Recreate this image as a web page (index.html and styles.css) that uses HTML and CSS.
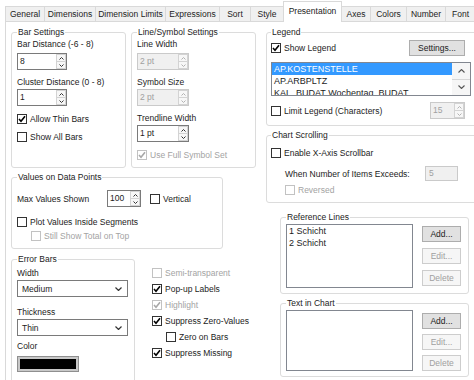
FILE: index.html
```html
<!DOCTYPE html>
<html lang="en">
<head>
    <meta charset="UTF-8">
    <title>Chart Properties - Presentation</title>
    <link rel="stylesheet" href="styles.css">
</head>
<body>
    <div class="tabs">
        <div class="tab" style="width:40px">General</div>
        <div class="tab" style="width:52px">Dimensions</div>
        <div class="tab" style="width:71px">Dimension Limits</div>
        <div class="tab" style="width:55px">Expressions</div>
        <div class="tab" style="width:32px">Sort</div>
        <div class="tab" style="width:34px">Style</div>
        <div class="tab active" style="width:59px">Presentation</div>
        <div class="tab" style="width:30px">Axes</div>
        <div class="tab" style="width:37px">Colors</div>
        <div class="tab" style="width:40px">Number</div>
        <div class="tab" style="width:31px">Font</div>
    </div>

    <div class="panel">
        <!-- left half: bar / line settings, values, error bars -->
        <div class="left">
            <div class="row-top">
                <fieldset class="bar-settings">
                    <legend>Bar Settings</legend>
                    <div class="lbl">Bar Distance (-6 - 8)</div>
                    <div class="spin w50 mt3">
                        <span class="val">8</span>
                        <span class="arrows"><span><svg viewBox="0 0 5 3"><path d="M.5 2.5l2-2 2 2"/></svg></span><span><svg viewBox="0 0 5 3"><path d="M.5.5l2 2 2-2"/></svg></span></span>
                    </div>
                    <div class="lbl mt6">Cluster Distance (0 - 8)</div>
                    <div class="spin w50 mt1">
                        <span class="val">1</span>
                        <span class="arrows"><span><svg viewBox="0 0 5 3"><path d="M.5 2.5l2-2 2 2"/></svg></span><span><svg viewBox="0 0 5 3"><path d="M.5.5l2 2 2-2"/></svg></span></span>
                    </div>
                    <div class="check mt7"><span class="box"><svg viewBox="0 0 8 8"><path d="M1 4l2 2.2L7 1.2"/></svg></span>Allow Thin Bars</div>
                    <div class="check mt6"><span class="box"></span>Show All Bars</div>
                </fieldset>

                <fieldset class="line-settings">
                    <legend>Line/Symbol Settings</legend>
                    <div class="lbl">Line Width</div>
                    <div class="spin w52 mt3 dis">
                        <span class="val">2 pt</span>
                        <span class="arrows"><span><svg viewBox="0 0 5 3"><path d="M.5 2.5l2-2 2 2"/></svg></span><span><svg viewBox="0 0 5 3"><path d="M.5.5l2 2 2-2"/></svg></span></span>
                    </div>
                    <div class="lbl mt6">Symbol Size</div>
                    <div class="spin w52 mt1 dis">
                        <span class="val">2 pt</span>
                        <span class="arrows"><span><svg viewBox="0 0 5 3"><path d="M.5 2.5l2-2 2 2"/></svg></span><span><svg viewBox="0 0 5 3"><path d="M.5.5l2 2 2-2"/></svg></span></span>
                    </div>
                    <div class="lbl mt6">Trendline Width</div>
                    <div class="spin w52 mt1">
                        <span class="val">1 pt</span>
                        <span class="arrows"><span><svg viewBox="0 0 5 3"><path d="M.5 2.5l2-2 2 2"/></svg></span><span><svg viewBox="0 0 5 3"><path d="M.5.5l2 2 2-2"/></svg></span></span>
                    </div>
                    <div class="check dis mt7"><span class="box"><svg viewBox="0 0 8 8"><path d="M1 4l2 2.2L7 1.2"/></svg></span>Use Full Symbol Set</div>
                </fieldset>
            </div>

            <fieldset class="values">
                <legend>Values on Data Points</legend>
                <div class="max-row">
                    <span class="max-lbl">Max Values Shown</span>
                    <div class="spin w34">
                        <span class="val">100</span>
                        <span class="arrows"><span><svg viewBox="0 0 5 3"><path d="M.5 2.5l2-2 2 2"/></svg></span><span><svg viewBox="0 0 5 3"><path d="M.5.5l2 2 2-2"/></svg></span></span>
                    </div>
                    <div class="check vertical"><span class="box"></span>Vertical</div>
                </div>
                <div class="check mt9"><span class="box"></span>Plot Values Inside Segments</div>
                <div class="check dis indent mt2"><span class="box"></span>Still Show Total on Top</div>
            </fieldset>

            <div class="row-bottom">
                <fieldset class="error-bars">
                    <legend>Error Bars</legend>
                    <div class="lbl mt2">Width</div>
                    <div class="select mt1">Medium<svg viewBox="0 0 7 4"><path d="M.5.5l3 3 3-3"/></svg></div>
                    <div class="lbl mt9">Thickness</div>
                    <div class="select mt1">Thin<svg viewBox="0 0 7 4"><path d="M.5.5l3 3 3-3"/></svg></div>
                    <div class="lbl mt4">Color</div>
                    <div class="swatch mt4"><span></span></div>
                </fieldset>

                <div class="opts">
                    <div class="check dis"><span class="box"></span>Semi-transparent</div>
                    <div class="check"><span class="box"><svg viewBox="0 0 8 8"><path d="M1 4l2 2.2L7 1.2"/></svg></span>Pop-up Labels</div>
                    <div class="check dis"><span class="box"><svg viewBox="0 0 8 8"><path d="M1 4l2 2.2L7 1.2"/></svg></span>Highlight</div>
                    <div class="check"><span class="box"><svg viewBox="0 0 8 8"><path d="M1 4l2 2.2L7 1.2"/></svg></span>Suppress Zero-Values</div>
                    <div class="check indent"><span class="box"></span>Zero on Bars</div>
                    <div class="check"><span class="box"><svg viewBox="0 0 8 8"><path d="M1 4l2 2.2L7 1.2"/></svg></span>Suppress Missing</div>
                </div>
            </div>
        </div>

        <!-- right half: legend, scrolling, reference lines, text -->
        <div class="right">
            <fieldset class="legend-box">
                <legend>Legend</legend>
                <div class="legend-top">
                    <div class="check"><span class="box"><svg viewBox="0 0 8 8"><path d="M1 4l2 2.2L7 1.2"/></svg></span>Show Legend</div>
                    <div class="btn settings">Settings...</div>
                </div>
                <div class="legend-list">
                    <div class="items">
                        <div class="item selected">AP.KOSTENSTELLE</div>
                        <div class="item">AP.ARBPLTZ</div>
                        <div class="item">KAL_BUDAT Wochentag_BUDAT</div>
                    </div>
                    <div class="scroll">
                        <span><svg viewBox="0 0 7 4"><path d="M.5 3.5l3-3 3 3"/></svg></span>
                        <span><svg viewBox="0 0 7 4"><path d="M.5.5l3 3 3-3"/></svg></span>
                    </div>
                </div>
                <div class="limit-row">
                    <div class="check"><span class="box"></span>Limit Legend (Characters)</div>
                    <div class="spin w35 dis">
                        <span class="val">15</span>
                        <span class="arrows"><span><svg viewBox="0 0 5 3"><path d="M.5 2.5l2-2 2 2"/></svg></span><span><svg viewBox="0 0 5 3"><path d="M.5.5l2 2 2-2"/></svg></span></span>
                    </div>
                </div>
            </fieldset>

            <fieldset class="scrolling">
                <legend>Chart Scrolling</legend>
                <div class="check mt6"><span class="box"></span>Enable X-Axis Scrollbar</div>
                <div class="when-row">
                    <span class="when-lbl">When Number of Items Exceeds:</span>
                    <span class="field dis">5</span>
                </div>
                <div class="check dis indent mt3"><span class="box"></span>Reversed</div>
            </fieldset>

            <fieldset class="sub ref-lines">
                <legend>Reference Lines</legend>
                <div class="list-row">
                    <div class="list">
                        <div class="item">1 Schicht</div>
                        <div class="item">2 Schicht</div>
                    </div>
                    <div class="btns">
                        <div class="btn">Add...</div>
                        <div class="btn dis">Edit...</div>
                        <div class="btn dis">Delete</div>
                    </div>
                </div>
            </fieldset>

            <fieldset class="sub text-chart">
                <legend>Text in Chart</legend>
                <div class="list-row">
                    <div class="list"></div>
                    <div class="btns">
                        <div class="btn">Add...</div>
                        <div class="btn dis">Edit...</div>
                        <div class="btn dis">Delete</div>
                    </div>
                </div>
            </fieldset>
        </div>
    </div>
</body>
</html>
```

FILE: styles.css
```css
body {
    margin: 0;
    width: 474px;
    height: 380px;
    overflow: hidden;
    background: #fff;
    font-family: "Liberation Sans", Arial, sans-serif;
    font-size: 8.5px;
    line-height: 12px;
    color: #1c1c1c;
}

/* tab strip */
.tabs {
    display: flex;
    align-items: flex-end;
    height: 21px;
    padding-left: 5px;
}
.tab {
    box-sizing: border-box;
    height: 15px;
    border: 1px solid #d9d9d9;
    border-bottom: none;
    margin-right: -1px;
    background: #f0f0f0;
    text-align: center;
    line-height: 14px;
    white-space: nowrap;
    flex: none;
}
.tab.active {
    height: 21px;
    margin-bottom: -1px;
    background: #fff;
    line-height: 19px;
    position: relative;
    z-index: 1;
}

.panel {
    box-sizing: border-box;
    display: flex;
    gap: 10px;
    height: 359px;
    margin-left: 5px;
    padding: 4px 0 0 5px;
    border-top: 1px solid #d9d9d9;
    border-left: 1px solid #d9d9d9;
    overflow: hidden;
}
.left { width: 245px; flex: none; }
.right { width: 212px; flex: none; }

/* group boxes */
fieldset {
    box-sizing: border-box;
    margin: 0;
    padding: 0 5px 6px;
    min-width: 0;
    border: 1px solid #dcdcdc;
    border-radius: 3px;
}
legend {
    padding: 0 1px;
    line-height: 12px;
}

.lbl { line-height: 12px; }
.mt1 { margin-top: 1px; }
.mt2 { margin-top: 2px; }
.mt3 { margin-top: 3px; }
.mt4 { margin-top: 4px; }
.mt6 { margin-top: 6px; }
.mt7 { margin-top: 7px; }
.mt9 { margin-top: 9px; }

/* checkboxes */
.check {
    display: flex;
    align-items: center;
    height: 12px;
    white-space: nowrap;
}
.check .box {
    box-sizing: border-box;
    width: 10px;
    height: 10px;
    margin-right: 3px;
    border: 1px solid #333;
    background: #fff;
    display: flex;
    align-items: center;
    justify-content: center;
    flex: none;
}
.check .box svg {
    width: 8px;
    height: 8px;
    fill: none;
    stroke: #000;
    stroke-width: 1.6;
}
.check.dis { color: #a3a3a3; }
.check.dis .box { border-color: #c2c2c2; }
.check.dis .box svg { stroke: #a8a8a8; }
.check.indent { padding-left: 14px; }

/* spinner boxes */
.spin {
    box-sizing: border-box;
    display: flex;
    height: 17px;
    border: 1px solid #7a7a7a;
    background: #fff;
}
.spin .val {
    flex: 1;
    padding-left: 2px;
    line-height: 15px;
}
.spin .arrows {
    width: 10px;
    display: flex;
    flex-direction: column;
}
.spin .arrows span {
    flex: 1;
    display: flex;
    align-items: center;
    justify-content: center;
    border: 1px solid #d3d3d3;
    background: #f7f7f7;
}
.spin .arrows span + span { border-top: none; }
.spin svg {
    width: 5px;
    height: 3px;
    fill: none;
    stroke: #333;
    stroke-width: 1;
}
.spin.dis {
    border-color: #cacaca;
    background: #f0f0f0;
    color: #a0a0a0;
}
.spin.dis svg { stroke: #b2b2b2; }
.w34 { width: 34px; }
.w35 { width: 35px; margin-right: 6px; }
.w50 { width: 50px; }
.w52 { width: 52px; }

/* top row of the left half */
.row-top {
    display: flex;
    gap: 5px;
}
.bar-settings { width: 115px; }
.line-settings { width: 125px; }

.values {
    width: 212px;
    margin-top: 3px;
}
.max-row {
    display: flex;
    align-items: center;
    height: 17px;
    margin-top: 7px;
}
.max-lbl { width: 90px; }
.check.vertical { margin-left: 9px; }

.row-bottom {
    display: flex;
    margin-top: 4px;
}
.error-bars {
    width: 124px;
    padding-bottom: 12px;
}
.select {
    box-sizing: border-box;
    display: flex;
    align-items: center;
    justify-content: space-between;
    width: 111px;
    height: 17px;
    padding: 0 5px 0 4px;
    border: 1px solid #7a7a7a;
    background: #fff;
}
.select svg {
    width: 7px;
    height: 4px;
    fill: none;
    stroke: #333;
    stroke-width: 1.2;
}
.swatch {
    box-sizing: border-box;
    width: 62px;
    height: 16px;
    padding: 2px;
    border: 1px solid #8f8f8f;
    background: #c8c8c8;
}
.swatch span {
    display: block;
    height: 100%;
    background: #000;
}

.opts {
    display: flex;
    flex-direction: column;
    gap: 4px;
    padding: 14px 0 0 17px;
}

/* buttons */
.btn {
    box-sizing: border-box;
    height: 16px;
    border: 1px solid #adadad;
    background: #e1e1e1;
    text-align: center;
    line-height: 14px;
}
.btn.dis {
    border-color: #cdcdcd;
    background: #f6f6f6;
    color: #a0a0a0;
}

/* right half */
.right fieldset { padding-left: 4px; padding-right: 6px; }
.legend-top {
    display: flex;
    align-items: center;
    justify-content: space-between;
    height: 16px;
    margin-top: 2px;
}
.settings {
    width: 56px;
    margin-right: 6px;
}
.legend-list {
    box-sizing: border-box;
    display: flex;
    height: 34px;
    margin-top: 6px;
    border: 1px solid #828790;
    overflow: hidden;
}
.legend-list .items { flex: 1; }
.item {
    height: 12px;
    padding-left: 2px;
    white-space: nowrap;
    font-size: 9px;
}
.item.selected {
    background: #3399ff;
    color: #fff;
}
.scroll {
    width: 18px;
    display: flex;
    flex-direction: column;
    background: #f6f6f6;
}
.scroll span {
    flex: 1;
    display: flex;
    align-items: center;
    justify-content: center;
}
.scroll span + span { border-top: 1px solid #d6d6d6; }
.scroll svg {
    width: 7px;
    height: 4px;
    fill: none;
    stroke: #555;
    stroke-width: 1.1;
}
.limit-row {
    display: flex;
    align-items: center;
    justify-content: space-between;
    height: 17px;
    margin-top: 6px;
}

.scrolling { margin-top: 3px; }
.when-row {
    display: flex;
    align-items: center;
    height: 15px;
    margin-top: 7px;
    padding-left: 14px;
}
.when-lbl { width: 140px; }
.field {
    box-sizing: border-box;
    width: 33px;
    height: 15px;
    padding-left: 3px;
    line-height: 13px;
    border: 1px solid #7a7a7a;
}
.field.dis {
    border-color: #cacaca;
    background: #f0f0f0;
    color: #a0a0a0;
}

.right .sub {
    margin: 8px 9px 0 14px;
    padding: 0 7px 5px 5px;
}
.right .text-chart { margin-top: 3px; }
.list-row {
    display: flex;
    gap: 9px;
    margin-top: 1px;
}
.list {
    box-sizing: border-box;
    flex: 1;
    height: 64px;
    border: 1px solid #828790;
    background: #fff;
}
.text-chart .list { height: 61px; }
.btns {
    width: 39px;
    display: flex;
    flex-direction: column;
    gap: 6px;
    padding-top: 2px;
}
.text-chart .btns { gap: 5px; padding-top: 3px; }
```
